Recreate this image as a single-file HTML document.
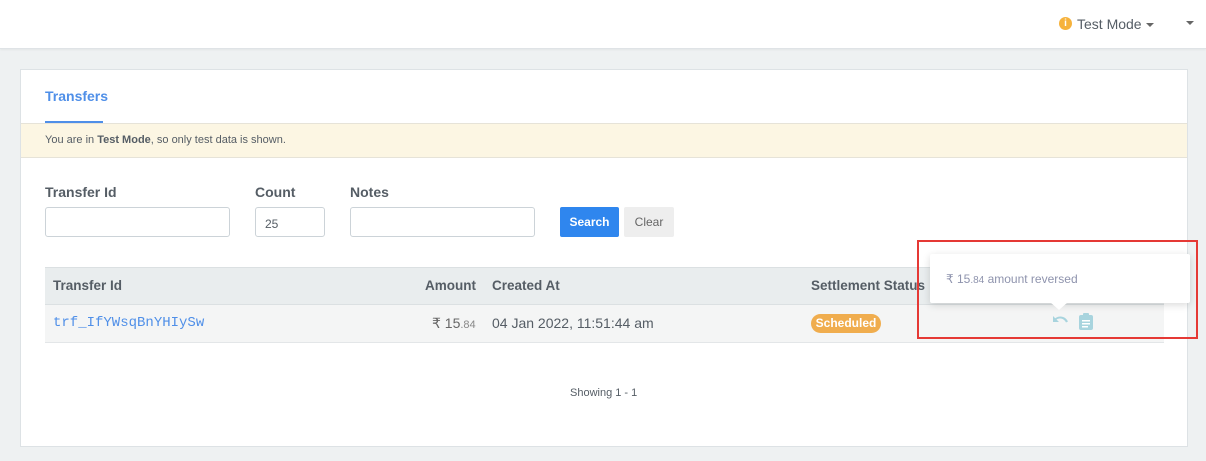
<!DOCTYPE html>
<html><head><meta charset="utf-8"><style>
*{box-sizing:border-box;margin:0;padding:0}
body{width:1206px;height:461px;background:#eef1f2;font-family:"Liberation Sans",sans-serif;color:#555d65;position:relative;overflow:hidden}
.a{position:absolute}
.top{left:0;top:0;width:1206px;height:49px;background:#fff;border-bottom:1px solid #dfe3e6;box-shadow:0 1px 2px rgba(0,0,0,.05)}
.card{left:20px;top:69px;width:1168px;height:378px;background:#fff;border:1px solid #dde2e5}
.lbl{font-size:14px;font-weight:bold;color:#555d65}
.th{font-size:13.5px;font-weight:bold;color:#555d65}
.inp{height:30px;border:1px solid #ccd3d8;border-radius:3px;background:#fff}
</style></head><body>
<div class="a top"></div>
<div class="a" style="left:1059px;top:17px;width:13px;height:13px;border-radius:50%;background:#f6b23c;color:#fff;font-size:10px;font-weight:bold;text-align:center;line-height:13px">i</div>
<div class="a" style="left:1077px;top:16px;font-size:14px;color:#555d65">Test Mode</div>
<div class="a" style="left:1146px;top:23px;border-left:4px solid transparent;border-right:4px solid transparent;border-top:4px solid #666"></div>
<div class="a" style="left:1186px;top:21px;border-left:4px solid transparent;border-right:4px solid transparent;border-top:4px solid #666"></div>

<div class="a card"></div>
<div class="a" style="left:45px;top:88px;font-size:14px;font-weight:bold;color:#4f8fe8">Transfers</div>
<div class="a" style="left:45px;top:121px;width:58px;height:3px;background:#4f8fe8"></div>
<div class="a" style="left:21px;top:123px;width:1166px;height:35px;background:#fcf6e3;border-top:1px solid #e6e3d8;border-bottom:1px solid #e6e3d8"></div>
<div class="a" style="left:45px;top:134px;font-size:11px;color:#555d65">You are in <b>Test Mode</b>, so only test data is shown.</div>

<div class="a lbl" style="left:45px;top:184px">Transfer Id</div>
<div class="a lbl" style="left:255px;top:184px">Count</div>
<div class="a lbl" style="left:350px;top:184px">Notes</div>
<div class="a inp" style="left:45px;top:207px;width:185px"></div>
<div class="a inp" style="left:255px;top:207px;width:70px;font-size:12px;padding:9px 0 0 9px">25</div>
<div class="a inp" style="left:350px;top:207px;width:185px"></div>
<div class="a" style="left:560px;top:207px;width:59px;height:30px;background:#2f86ee;border-radius:2px;color:#fff;font-size:12px;font-weight:bold;text-align:center;line-height:30px">Search</div>
<div class="a" style="left:624px;top:207px;width:50px;height:30px;background:#eeeeee;border-radius:2px;color:#666;font-size:12px;text-align:center;line-height:30px">Clear</div>

<div class="a" style="left:45px;top:267px;width:1119px;height:38px;background:#e9edee;border-top:1px solid #dbe0e2;border-bottom:1px solid #dbe0e2"></div>
<div class="a" style="left:45px;top:305px;width:1119px;height:38px;background:#f4f5f5;border-bottom:1px solid #e3e6e8"></div>
<div class="a th" style="left:53px;top:278px">Transfer Id</div>
<div class="a th" style="left:425px;top:278px">Amount</div>
<div class="a th" style="left:492px;top:278px">Created At</div>
<div class="a th" style="left:811px;top:278px">Settlement Status</div>
<div class="a" style="left:53px;top:315px;font-family:'Liberation Mono',monospace;font-size:14px;color:#4f8fe8">trf_IfYWsqBnYHIySw</div>
<div class="a" style="left:432px;top:315px;font-size:14px;color:#666">₹ 15<span style="font-size:11px;color:#888">.84</span></div>
<div class="a" style="left:492px;top:315px;font-size:14px;color:#555d65">04 Jan 2022, 11:51:44 am</div>
<div class="a" style="left:811px;top:314px;width:70px;height:19px;border-radius:10px;background:#f0ad4e;color:#fff;font-size:12px;font-weight:bold;text-align:center;line-height:19px">Scheduled</div>

<svg class="a" style="left:1051px;top:313px" width="18" height="14" viewBox="0 0 18 14"><path d="M2 3 L2 9 L8 9 L5.5 6.5 C9 4.5 13 5.5 15 9.5 L17 8.5 C14.5 3.5 9 2 4.2 5.2 Z" fill="#a8d4de"/></svg>
<svg class="a" style="left:1078px;top:312px" width="16" height="18" viewBox="0 0 16 18"><rect x="1" y="3" width="14" height="15" rx="2" fill="#a8d4de"/><rect x="5" y="1" width="6" height="4" rx="1" fill="#a8d4de"/><rect x="4" y="8" width="8" height="1.5" fill="#fff"/><rect x="4" y="11" width="8" height="1.5" fill="#fff"/><rect x="4" y="14" width="6" height="1.5" fill="#fff"/></svg>

<div class="a" style="left:930px;top:254px;width:260px;height:49px;background:#fff;box-shadow:0 2px 8px rgba(0,0,0,.15);border-radius:2px"></div>
<div class="a" style="left:1050px;top:302px;border-left:9px solid transparent;border-right:9px solid transparent;border-top:8px solid #fff"></div>
<div class="a" style="left:946px;top:272px;font-size:12px;color:#8e93ad">₹ 15<span style="font-size:10px">.84</span> amount reversed</div>
<div class="a" style="left:917px;top:240px;width:281px;height:99px;border:2px solid #e53935"></div>

<div class="a" style="left:570px;top:387px;font-size:11px;color:#555d65">Showing 1 - 1</div>
</body></html>
